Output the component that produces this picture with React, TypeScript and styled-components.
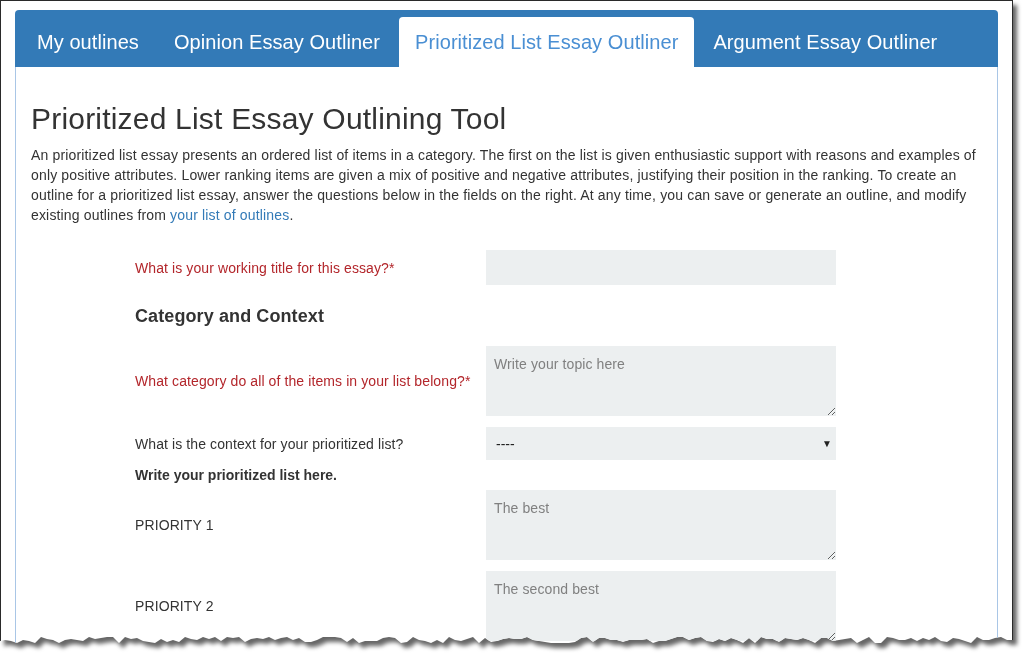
import styled, { createGlobalStyle } from "styled-components";

const GlobalStyle = createGlobalStyle`
	html, body {
		margin: 0;
		padding: 0;
		background: #ffffff;
	}
	body {
		font-family: "Liberation Sans", Arial, Helvetica, sans-serif;
		color: #333333;
	}
	* {
		box-sizing: border-box;
	}
`;

// jagged bottom edge of the torn screenshot
const tornEdge = (() => {
	let seed = 7;
	const rand = () => {
		seed = (seed * 9301 + 49297) % 233280;
		return seed / 233280;
	};
	const pts: string[] = ["0px 0px", "1013px 0px"];
	for (let x = 1013; x >= 0; x -= 6) {
		const y = 640 + Math.round((rand() - 0.5) * 7);
		pts.push(`${x}px ${y}px`);
	}
	pts.push("0px 641px");
	return `polygon(${pts.join(", ")})`;
})();

const Shadow = styled.div`
	width: 1024px;
	height: 657px;
	filter: drop-shadow(4px 5px 2px rgba(0, 0, 0, 0.6));
`;

const Sheet = styled.div`
	width: 1013px;
	height: 650px;
	background: #ffffff;
	border: 1px solid #2a2a2a;
	padding: 9px 14px 0 14px;
	clip-path: ${tornEdge};
	overflow: hidden;
`;

const Panel = styled.div`
	display: flex;
	flex-direction: column;
	height: 100%;
`;

const TabBar = styled.ul`
	display: flex;
	gap: 3px;
	margin: 0;
	padding: 7px 0 0 6px;
	list-style: none;
	height: 57px;
	background: #337ab7;
	border-radius: 4px 4px 0 0;
`;

const Tab = styled.li<{ $active?: boolean }>`
	display: flex;
	align-items: center;
	height: 50px;
	padding: 0 16px;
	font-size: 20px;
	letter-spacing: 0.07px;
	color: ${(p) => (p.$active ? "#4a8fd3" : "#ffffff")};
	background: ${(p) => (p.$active ? "#ffffff" : "transparent")};
	border-radius: 4px 4px 0 0;
	white-space: nowrap;
`;

const Body = styled.div`
	flex: 1;
	padding: 15px 15px 0;
	border-left: 1px solid #a9c6e6;
	border-right: 1px solid #a9c6e6;
`;

const Title = styled.h1`
	margin: 20px 0 10px;
	font-size: 30px;
	font-weight: 400;
	line-height: 1.1;
	letter-spacing: 0.2px;
	color: #333333;
`;

const Intro = styled.p`
	margin: 0 0 25px;
	font-size: 14px;
	line-height: 20px;
	letter-spacing: 0.16px;
	color: #333333;
`;

const Link = styled.a`
	color: #337ab7;
	text-decoration: none;
`;

const Form = styled.form`
	display: flex;
	flex-direction: column;
	padding-left: 104px;
`;

const Row = styled.div<{ $gap?: number }>`
	display: flex;
	align-items: center;
	margin-bottom: ${(p) => p.$gap ?? 11}px;
`;

const Label = styled.label<{ $required?: boolean }>`
	width: 351px;
	font-size: 14px;
	letter-spacing: 0.1px;
	color: ${(p) => (p.$required ? "#b3262b" : "#333333")};
`;

const TextInput = styled.input`
	width: 350px;
	height: 35px;
	border: none;
	background: #eceff0;
	padding: 0 8px;
	font: inherit;
	font-size: 14px;
	outline: none;
`;

const TextArea = styled.textarea`
	width: 350px;
	height: 70px;
	border: none;
	background: #eceff0;
	padding: 10px 8px;
	font-family: "Liberation Sans", Arial, sans-serif;
	font-size: 14px;
	line-height: 16px;
	letter-spacing: 0.1px;
	outline: none;
	resize: vertical;

	&::placeholder {
		color: #808080;
	}
`;

const SelectWrap = styled.div`
	position: relative;
	width: 350px;
	height: 33px;

	&::after {
		content: "▼";
		position: absolute;
		right: 4px;
		top: 11px;
		font-size: 10px;
		color: #222222;
		pointer-events: none;
	}
`;

const Select = styled.select`
	appearance: none;
	width: 100%;
	height: 100%;
	border: none;
	background: #eceff0;
	padding: 0 10px;
	font-family: "Liberation Sans", Arial, sans-serif;
	font-size: 14px;
	color: #222222;
	outline: none;
`;

const SectionHeading = styled.h3`
	margin: 21px 0 20px;
	font-size: 18px;
	line-height: 20px;
	font-weight: 700;
	letter-spacing: 0.1px;
	color: #333333;
`;

const SubHeading = styled.div`
	margin: 5px 0 5px;
	font-size: 14px;
	line-height: 20px;
	font-weight: 700;
	color: #333333;
`;

const tabs = [
	"My outlines",
	"Opinion Essay Outliner",
	"Prioritized List Essay Outliner",
	"Argument Essay Outliner",
];

const priorities = [
	{ label: "PRIORITY 1", hint: "The best" },
	{ label: "PRIORITY 2", hint: "The second best" },
];

const App = () => {
	return (
		<>
			<GlobalStyle />
			<Shadow>
				<Sheet>
					<Panel>
						<TabBar>
							{tabs.map((t, i) => (
								<Tab key={t} $active={i === 2}>
									{t}
								</Tab>
							))}
						</TabBar>
						<Body>
							<Title>Prioritized List Essay Outlining Tool</Title>
							<Intro>
								An prioritized list essay presents an ordered list of items in a category. The first on the list is given
								enthusiastic support with reasons and examples of only positive attributes. Lower ranking items are given a
								mix of positive and negative attributes, justifying their position in the ranking. To create an outline for a
								prioritized list essay, answer the questions below in the fields on the right. At any time, you can save or
								generate an outline, and modify existing outlines from <Link href="#">your list of outlines</Link>.
							</Intro>
							<Form onSubmit={(e) => e.preventDefault()}>
								<Row $gap={0}>
									<Label $required>What is your working title for this essay?*</Label>
									<TextInput type="text" />
								</Row>
								<SectionHeading>Category and Context</SectionHeading>
								<Row>
									<Label $required>What category do all of the items in your list belong?*</Label>
									<TextArea placeholder="Write your topic here" />
								</Row>
								<Row $gap={0}>
									<Label>What is the context for your prioritized list?</Label>
									<SelectWrap>
										<Select defaultValue="">
											<option value="">----</option>
										</Select>
									</SelectWrap>
								</Row>
								<SubHeading>Write your prioritized list here.</SubHeading>
								{priorities.map((p) => (
									<Row key={p.label}>
										<Label>{p.label}</Label>
										<TextArea placeholder={p.hint} />
									</Row>
								))}
							</Form>
						</Body>
					</Panel>
				</Sheet>
			</Shadow>
		</>
	);
};

export default App;
